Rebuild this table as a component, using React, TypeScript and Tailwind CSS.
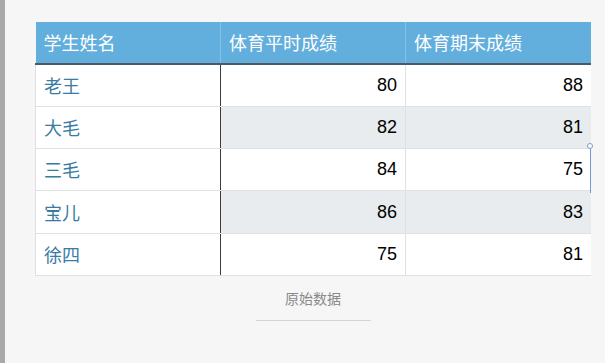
const rows = [
  { name: '老王', usual: 80, final: 88 },
  { name: '大毛', usual: 82, final: 81 },
  { name: '三毛', usual: 84, final: 75 },
  { name: '宝儿', usual: 86, final: 83 },
  { name: '徐四', usual: 75, final: 81 },
];

const font = { fontFamily: '"Noto Sans CJK SC", "Liberation Sans", sans-serif' };

export default function App() {
  return (
    <div className="flex h-[363px] w-[605px] overflow-hidden bg-[#f6f6f6]" style={font}>
      <div className="w-[5px] shrink-0 bg-[#a9a9a9]" />
      <div className="relative ml-[30px] mt-[22px] w-[556px]">
        <table className="w-full table-fixed border-collapse">
          <thead>
            <tr className="h-[42px] bg-[#62aedc] text-white">
              <th className="w-[185px] border-b-2 border-b-[#4b5966] pl-2 text-left text-[18px] font-normal">学生姓名</th>
              <th className="w-[185px] border-b-2 border-l border-b-[#4b5966] border-l-[#84c1e6] pl-2 text-left text-[18px] font-normal">体育平时成绩</th>
              <th className="border-b-2 border-l border-b-[#4b5966] border-l-[#84c1e6] pl-2 text-left text-[18px] font-normal">体育期末成绩</th>
            </tr>
          </thead>
          <tbody>
            {rows.map((r, i) => (
              <tr key={r.name} className="h-[42.3px]">
                <td className="border-b border-l border-[#dfe1e3] bg-white pl-2 text-[18px] text-[#3a7ba4]">{r.name}</td>
                <td
                  className={`border-b border-l border-b-[#dfe1e3] border-l-[#3c3c3c] pr-2 text-right text-[18px] text-black ${
                    i % 2 === 1 ? 'bg-[#e8ecee]' : 'bg-white'
                  }`}
                  style={{ fontFamily: '"Liberation Sans", sans-serif' }}
                >
                  {r.usual}
                </td>
                <td
                  className={`border-b border-l border-[#dfe1e3] pr-2 text-right text-[18px] text-black ${
                    i % 2 === 1 ? 'bg-[#e8ecee]' : 'bg-white'
                  }`}
                  style={{ fontFamily: '"Liberation Sans", sans-serif' }}
                >
                  {r.final}
                </td>
              </tr>
            ))}
          </tbody>
        </table>
        {/* selection caret */}
        <div className="absolute right-[-2px] top-[121px] flex flex-col items-center">
          <div className="h-[6px] w-[6px] rounded-full border border-[#7a9bc8] bg-white" />
          <div className="h-[44px] w-px bg-[#6f9ad6]" />
        </div>
        <div className="mt-[12px] flex flex-col items-center">
          <div className="text-[14px] leading-[20px] text-[#8a8a8a]">原始数据</div>
          <div className="mt-[12px] h-px w-[115px] bg-[#d4d4d4]" />
        </div>
      </div>
    </div>
  );
}
